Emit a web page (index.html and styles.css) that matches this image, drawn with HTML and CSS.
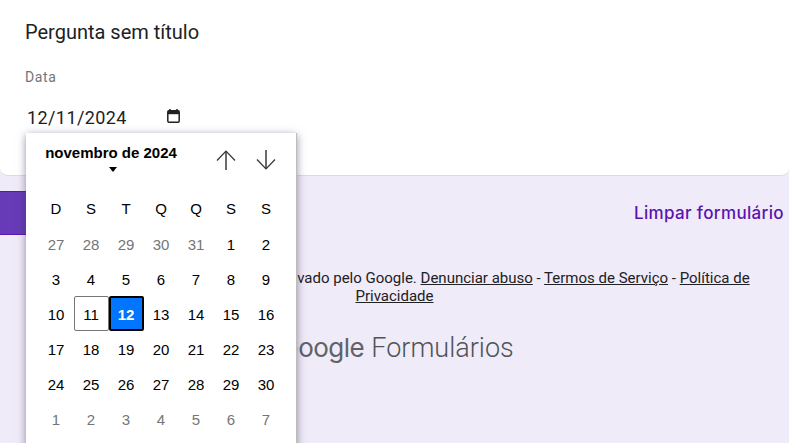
FILE: index.html
```html
<!DOCTYPE html>
<html lang="pt-BR">
<head>
    <meta charset="UTF-8">
    <title>Pergunta sem título</title>
    <link rel="stylesheet" href="styles.css">
</head>
<body>
    <div class="card">
        <div class="question">Pergunta sem título</div>
        <div class="field-label">Data</div>
        <div class="date-field">
            <span class="date-value">12/11/2024</span>
            <svg class="cal-icon" width="13" height="14" viewBox="0 0 13 14">
                <path d="M3 0v2M10 0v2" stroke="#202124" stroke-width="1.500" fill="none"/>
                <rect x="0.800" y="1.800" width="11.400" height="11.400" rx="1.200" fill="none" stroke="#202124" stroke-width="1.500"/>
                <rect x="0.800" y="1.800" width="11.400" height="3.400" fill="#202124"/>
            </svg>
        </div>
    </div>

    <div class="actions">
        <button class="submit" type="button"></button>
        <span class="clear">Limpar formulário</span>
    </div>

    <p class="disclaimer">Este conteúdo não foi criado nem aprovado pelo Google. <a href="#">Denunciar abuso</a> - <a href="#">Termos de Serviço</a> - <a href="#">Política de Privacidade</a></p>

    <div class="brand"><span class="brand-google">Google</span><span class="brand-forms">Formulários</span></div>

    <div class="picker">
        <div class="picker-head">
            <div class="month">
                <span>novembro de 2024</span>
                <i class="caret"></i>
            </div>
            <svg class="arrow" width="20" height="20" viewBox="0 0 20 20">
                <path d="M10 20V2" fill="none" stroke="#6a6a6a" stroke-width="2"/>
                <path d="M1 10.500l9-9.500 9 9.500" fill="none" stroke="#333" stroke-width="1.200"/>
            </svg>
            <svg class="arrow" width="20" height="20" viewBox="0 0 20 20">
                <path d="M10 0v18" fill="none" stroke="#6a6a6a" stroke-width="2"/>
                <path d="M1 9.500l9 9.500 9-9.500" fill="none" stroke="#333" stroke-width="1.200"/>
            </svg>
        </div>
        <div class="grid">
            <span class="wd">D</span><span class="wd">S</span><span class="wd">T</span><span class="wd">Q</span><span class="wd">Q</span><span class="wd">S</span><span class="wd">S</span>
            <span class="off">27</span><span class="off">28</span><span class="off">29</span><span class="off">30</span><span class="off">31</span><span>1</span><span>2</span>
            <span>3</span><span>4</span><span>5</span><span>6</span><span>7</span><span>8</span><span>9</span>
            <span>10</span><span class="today">11</span><span class="selected">12</span><span>13</span><span>14</span><span>15</span><span>16</span>
            <span>17</span><span>18</span><span>19</span><span>20</span><span>21</span><span>22</span><span>23</span>
            <span>24</span><span>25</span><span>26</span><span>27</span><span>28</span><span>29</span><span>30</span>
            <span class="off">1</span><span class="off">2</span><span class="off">3</span><span class="off">4</span><span class="off">5</span><span class="off">6</span><span class="off">7</span>
        </div>
    </div>
</body>
</html>
```

FILE: styles.css
```css
html, body {
    height: 100%;
}

body {
    margin: 0;
    overflow: hidden;
    background: #f0ebf8;
    font-family: Roboto, "Liberation Sans", sans-serif;
    color: #202124;
}

.card {
    height: 176px;
    box-sizing: border-box;
    padding: 20px 25px 0;
    background: #fff;
    border-bottom: 1px solid #dadce0;
    border-radius: 0 0 8px 8px;
}

.question {
    font-size: 20px;
    line-height: 24px;
}

.field-label {
    margin-top: 25px;
    font-size: 14px;
    line-height: 16px;
    letter-spacing: 0.6px;
    color: #70757a;
}

.date-field {
    display: flex;
    align-items: center;
    margin-top: 20px;
    height: 24px;
}

.date-value {
    width: 140px;
    padding-left: 2px;
    font-size: 18px;
    letter-spacing: 0.4px;
}

.cal-icon {
    margin-top: -3px;
}

.actions {
    display: flex;
    justify-content: space-between;
    align-items: center;
    height: 44px;
    margin-top: 15px;
}

.submit {
    width: 90px;
    height: 44px;
    margin-left: -30px;
    border: 1px solid #5b16b4;
    border-radius: 4px;
    background: #673ab7;
}

.clear {
    padding-right: 5px;
    font-family: Inter, Roboto, sans-serif;
    font-size: 17px;
    font-weight: 500;
    letter-spacing: 0.35px;
    color: #5a12b0;
}

.disclaimer {
    margin: 34px 30px 0;
    font-size: 15px;
    line-height: 18px;
    text-align: center;
    color: #202124;
}

.disclaimer a {
    color: inherit;
}

.brand {
    display: flex;
    justify-content: center;
    align-items: baseline;
    gap: 7px;
    margin-top: 26px;
    padding-left: 4px;
    font-size: 27px;
    line-height: 34px;
    color: #5f6368;
}

.brand-google {
    font-family: Inter, Roboto, sans-serif;
    font-size: 26px;
    font-weight: 400;
    letter-spacing: -0.5px;
}

.brand-forms {
    font-weight: 300;
    color: #4f5357;
}

.picker {
    position: absolute;
    left: 26px;
    top: 133px;
    box-sizing: border-box;
    width: 271px;
    height: 330px;
    background: #fff;
    border-right: 1px solid #bdbdbd;
    box-shadow: 0 2px 8px rgba(60, 50, 90, 0.55);
    font-family: "Liberation Sans", Arial, sans-serif;
    color: #000;
}

.picker-head {
    display: flex;
    align-items: flex-start;
    padding: 13px 0 0 19px;
    gap: 20px;
}

.month {
    display: flex;
    flex-direction: column;
    align-items: center;
    width: 132px;
    margin-right: 19px;
    font-size: 15px;
    font-weight: 700;
    line-height: 14px;
    white-space: nowrap;
}

.caret {
    margin-top: 7px;
    margin-left: 3px;
    border-left: 4px solid transparent;
    border-right: 4px solid transparent;
    border-top: 5px solid #000;
}

.arrow {
    margin-top: 4px;
}

.grid {
    display: grid;
    grid-template-columns: repeat(7, 35px);
    grid-template-rows: 36px;
    grid-auto-rows: 35px;
    padding: 18px 0 0 13px;
    font-size: 15px;
    text-align: center;
}

.grid span {
    display: flex;
    align-items: center;
    justify-content: center;
    box-sizing: border-box;
    padding: 2px 1px 0 0;
}

.grid .wd {
    padding-top: 0;
}

.grid .off {
    color: #757575;
}

.grid .today {
    border: 1px solid #767676;
    border-radius: 2px;
}

.grid .selected {
    border: 2px solid #000;
    border-radius: 2px;
    background: #0075ff;
    color: #fff;
    font-weight: 700;
}
```
